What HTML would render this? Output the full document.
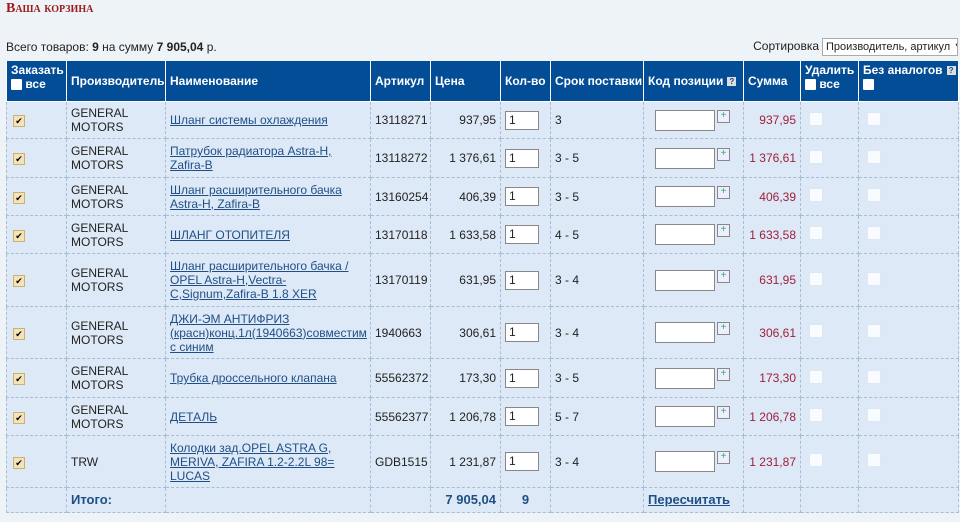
<!DOCTYPE html>
<html><head><meta charset="utf-8"><style>
body{margin:0;width:960px;height:522px;overflow:hidden;background:#eef3f8;font-family:"Liberation Sans",sans-serif;font-size:12px;color:#222;position:relative}
.t{position:absolute;left:6px;top:1px;color:#9b1b1b;font-weight:bold;font-size:14px;font-family:"Liberation Serif",serif;font-variant:small-caps}
.s{position:absolute;left:6px;top:40px;font-size:12px}
.so{position:absolute;right:2px;top:38px;font-size:12px;white-space:nowrap}
.so span{display:inline-block;vertical-align:middle;border:1px solid #aaa;background:#fff;padding:2px 3px;font-size:11px;width:128px;margin-left:3px;white-space:nowrap;overflow:hidden}
table{position:absolute;left:6px;top:61px;border-collapse:collapse;table-layout:fixed;width:952px;background:#dde9f6;line-height:14px}
th{background:#034d97;color:#fff;font-weight:bold;text-align:left;padding:2px 4px;border:1px solid #fff;border-top:0;font-size:12px;height:36px;white-space:nowrap;overflow:hidden}
td{border:1px dashed #a8bdd3;padding:0 4px;vertical-align:middle}
a{color:#1f4f86;text-decoration:underline}
.cb{display:inline-block;width:10px;height:10px;background:#f5e3b5;border:1px solid #c9b27a;font-size:9px;line-height:10px;text-align:center;color:#000;margin-left:2px}
.wb{display:inline-block;width:11px;height:11px;background:#fff;vertical-align:middle;border-radius:1px}
.eb{display:inline-block;width:12px;height:12px;background:#f8fbff;border:1px solid #dfe7ef;border-radius:2px;margin-left:4px}
.in{display:inline-block;border:1px solid #888;background:#fff;line-height:17px;padding-left:3px;box-sizing:border-box;width:34px;height:19px}
.ci{display:inline-block;width:58px;height:19px;border:1px solid #888;background:#fff;vertical-align:middle;margin-left:7px}
.pl{display:inline-block;width:11px;height:11px;border:1px solid #888;background:#eef;vertical-align:top;margin-left:2px;font-size:10px;line-height:10px;text-align:center;color:#3a7}
.r{text-align:right;white-space:nowrap}.red{color:#a0203a;text-align:right;white-space:nowrap}
.q{display:inline-block;width:9px;height:9px;background:#ddd;color:#034d97;font-size:8px;line-height:9px;text-align:center;margin-left:4px;vertical-align:middle}
.f td{font-weight:bold;color:#1f4f86;font-size:13px}
</style></head><body>
<div class="t">Ваша корзина</div>
<div class="s">Всего товаров: <b>9</b> на сумму <b>7 905,04</b> р.</div>
<div class="so">Сортировка<span>Производитель, артикул ▼</span></div>
<table>
<colgroup><col style="width:60px"><col style="width:99px"><col style="width:205px"><col style="width:60px"><col style="width:70px"><col style="width:50px"><col style="width:93px"><col style="width:100px"><col style="width:57px"><col style="width:58px"><col style="width:100px"></colgroup>
<tr style="height:40px"><th style="vertical-align:top">Заказать<br><span class="wb"></span> все</th><th>Производитель</th><th>Наименование</th><th>Артикул</th><th>Цена</th><th>Кол-во</th><th>Срок поставки</th><th>Код позиции<span class="q">?</span></th><th>Сумма</th><th style="vertical-align:top">Удалить<br><span class="wb"></span> все</th><th style="vertical-align:top">Без аналогов<span class="q">?</span><br><span class="wb"></span></th></tr>
<tr style="height:37px"><td><span class="cb">✔</span></td><td>GENERAL<br>MOTORS</td><td><a>Шланг системы охлаждения</a></td><td>13118271</td><td class="r">937,95</td><td><span class="in">1</span></td><td>3</td><td><span class="ci"></span><span class="pl">+</span></td><td class="red">937,95</td><td><span class="eb"></span></td><td><span class="eb"></span></td></tr>
<tr style="height:39px"><td><span class="cb">✔</span></td><td>GENERAL<br>MOTORS</td><td><a>Патрубок радиатора Astra-H, Zafira-B</a></td><td>13118272</td><td class="r">1 376,61</td><td><span class="in">1</span></td><td>3 - 5</td><td><span class="ci"></span><span class="pl">+</span></td><td class="red">1 376,61</td><td><span class="eb"></span></td><td><span class="eb"></span></td></tr>
<tr style="height:38px"><td><span class="cb">✔</span></td><td>GENERAL<br>MOTORS</td><td><a>Шланг расширительного бачка Astra-H, Zafira-B</a></td><td>13160254</td><td class="r">406,39</td><td><span class="in">1</span></td><td>3 - 5</td><td><span class="ci"></span><span class="pl">+</span></td><td class="red">406,39</td><td><span class="eb"></span></td><td><span class="eb"></span></td></tr>
<tr style="height:38px"><td><span class="cb">✔</span></td><td>GENERAL<br>MOTORS</td><td><a>ШЛАНГ ОТОПИТЕЛЯ</a></td><td>13170118</td><td class="r">1 633,58</td><td><span class="in">1</span></td><td>4 - 5</td><td><span class="ci"></span><span class="pl">+</span></td><td class="red">1 633,58</td><td><span class="eb"></span></td><td><span class="eb"></span></td></tr>
<tr style="height:53px"><td><span class="cb">✔</span></td><td>GENERAL<br>MOTORS</td><td><a>Шланг расширительного бачка / OPEL Astra-H,Vectra-C,Signum,Zafira-B 1.8 XER</a></td><td>13170119</td><td class="r">631,95</td><td><span class="in">1</span></td><td>3 - 4</td><td><span class="ci"></span><span class="pl">+</span></td><td class="red">631,95</td><td><span class="eb"></span></td><td><span class="eb"></span></td></tr>
<tr style="height:52px"><td><span class="cb">✔</span></td><td>GENERAL<br>MOTORS</td><td><a>ДЖИ-ЭМ АНТИФРИЗ (красн)конц.1л(1940663)совместим с синим</a></td><td>1940663</td><td class="r">306,61</td><td><span class="in">1</span></td><td>3 - 4</td><td><span class="ci"></span><span class="pl">+</span></td><td class="red">306,61</td><td><span class="eb"></span></td><td><span class="eb"></span></td></tr>
<tr style="height:39px"><td><span class="cb">✔</span></td><td>GENERAL<br>MOTORS</td><td><a>Трубка дроссельного клапана</a></td><td>55562372</td><td class="r">173,30</td><td><span class="in">1</span></td><td>3 - 5</td><td><span class="ci"></span><span class="pl">+</span></td><td class="red">173,30</td><td><span class="eb"></span></td><td><span class="eb"></span></td></tr>
<tr style="height:38px"><td><span class="cb">✔</span></td><td>GENERAL<br>MOTORS</td><td><a>ДЕТАЛЬ</a></td><td>55562377</td><td class="r">1 206,78</td><td><span class="in">1</span></td><td>5 - 7</td><td><span class="ci"></span><span class="pl">+</span></td><td class="red">1 206,78</td><td><span class="eb"></span></td><td><span class="eb"></span></td></tr>
<tr style="height:52px"><td><span class="cb">✔</span></td><td>TRW</td><td><a>Колодки зад.OPEL ASTRA G, MERIVA, ZAFIRA 1.2-2.2L 98= LUCAS</a></td><td>GDB1515</td><td class="r">1 231,87</td><td><span class="in">1</span></td><td>3 - 4</td><td><span class="ci"></span><span class="pl">+</span></td><td class="red">1 231,87</td><td><span class="eb"></span></td><td><span class="eb"></span></td></tr>
<tr class="f" style="height:25px"><td></td><td>Итого:</td><td></td><td></td><td class="r">7 905,04</td><td style="text-align:center">9</td><td></td><td><a>Пересчитать</a></td><td></td><td></td><td></td></tr>
</table>
</body></html>
